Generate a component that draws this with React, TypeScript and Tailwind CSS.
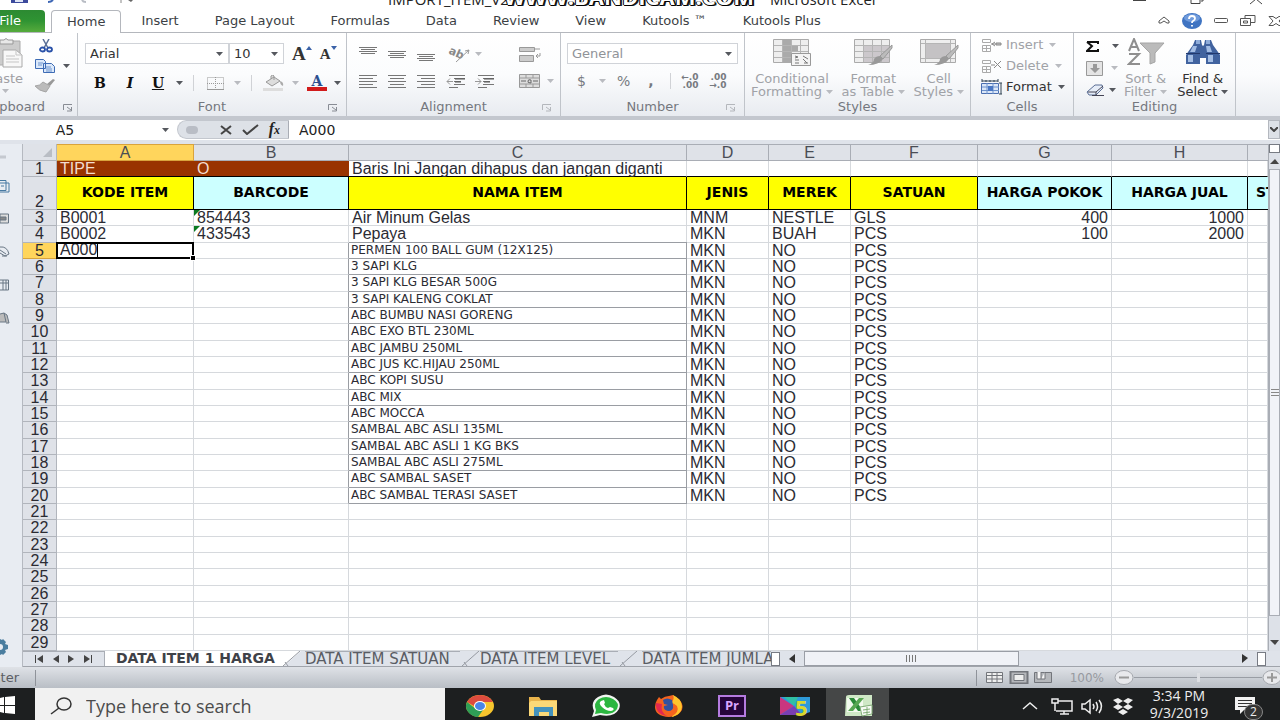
import type { ReactNode } from "react";
import clsx from "clsx";

const MENU = ["Insert", "Page Layout", "Formulas", "Data", "Review", "View", "Kutools ™", "Kutools Plus"];

const COLUMNS = [
    { id: "A", width: 137 },
    { id: "B", width: 155 },
    { id: "C", width: 338 },
    { id: "D", width: 82 },
    { id: "E", width: 82 },
    { id: "F", width: 127 },
    { id: "G", width: 134 },
    { id: "H", width: 136 }
];

const HEADINGS = [
    { text: "KODE ITEM", cyan: false },
    { text: "BARCODE", cyan: true },
    { text: "NAMA ITEM", cyan: false },
    { text: "JENIS", cyan: false },
    { text: "MEREK", cyan: false },
    { text: "SATUAN", cyan: false },
    { text: "HARGA POKOK", cyan: true },
    { text: "HARGA JUAL", cyan: true }
];

const STOCK = [
    ["B0001", "854443", "Air Minum Gelas", "MNM", "NESTLE", "GLS", "400", "1000"],
    ["B0002", "433543", "Pepaya", "MKN", "BUAH", "PCS", "100", "2000"]
];

const ITEMS = [
    "PERMEN 100 BALL GUM (12X125)",
    "3 SAPI KLG",
    "3 SAPI KLG BESAR 500G",
    "3 SAPI KALENG COKLAT",
    "ABC BUMBU NASI GORENG",
    "ABC EXO BTL 230ML",
    "ABC JAMBU 250ML",
    "ABC JUS KC.HIJAU 250ML",
    "ABC KOPI SUSU",
    "ABC MIX",
    "ABC MOCCA",
    "SAMBAL ABC ASLI 135ML",
    "SAMBAL ABC ASLI 1 KG BKS",
    "SAMBAL ABC ASLI 275ML",
    "ABC SAMBAL SASET",
    "ABC SAMBAL TERASI SASET"
];

const EMPTY_ROWS = [21, 22, 23, 24, 25, 26, 27, 28, 29];

export default function App() {
    return (
        <div className="flex h-screen flex-col overflow-hidden bg-white font-['DejaVu_Sans',sans-serif] text-[13px] leading-4 text-[#3c3f45]">
            <TitleBar />
            <MenuTabs />
            <Ribbon />
            <FormulaBar />
            <main className="flex min-h-0 flex-1">
                <SideStrip />
                <div className="flex min-w-0 flex-1 flex-col">
                    <div className="flex min-h-0 flex-1">
                        <Sheet />
                        <VerticalScroll />
                    </div>
                    <SheetTabs />
                </div>
            </main>
            <StatusBar />
            <Taskbar />
        </div>
    );
}

function TitleBar() {
    return (
        <header className="relative flex h-[10px] shrink-0 items-end justify-between overflow-hidden">
            <svg width="136" height="8" className="self-start" aria-hidden="true">
                <path d="M11 0h17v3H11z" fill="#3c4a9c" />
                <path d="M15 0h8v2h-8z" fill="#dfe5f5" />
                <path d="M53 0q-2 2-5 2" stroke="#3d66b5" strokeWidth="2" fill="none" />
                <path d="M82 0q1 2 4 2" stroke="#b8bcc4" strokeWidth="2" fill="none" />
                <path d="M121 0v3" stroke="#888" />
                <path d="M128 0h5l-2 2z" fill="#666" />
            </svg>
            <div className="absolute bottom-px left-[388px] flex items-baseline whitespace-nowrap font-['Open_Sans',sans-serif] text-[15px] leading-5 text-[#222]">
                <span className="w-[116px]">IMPORT_ITEM_V2</span>
                <span className="w-[266px] text-[22px] font-bold text-white [text-shadow:1px_0_#000,-1px_0_#000,0_1px_#000,2px_1px_#222]">
                    WWW.BANDICAM.COM
                </span>
                <span>Microsoft Excel</span>
            </div>
            <svg width="160" height="8" className="self-start" fill="none" stroke="#444" aria-hidden="true">
                <path d="M13 .5h13M71 0v3.500h9V0M81 1h2V0M130 4l6-5 6 5" />
            </svg>
        </header>
    );
}

function MenuTabs() {
    return (
        <nav className="flex h-[23px] shrink-0 items-end border-b border-[#b4b7bd]">
            <button className="flex h-[22px] w-[45px] items-center justify-end self-end rounded-tr-sm bg-linear-to-b from-[#2c8a32] via-[#2f9433] to-[#55ab3c] pr-6 text-white">
                File
            </button>
            <button className="-mb-px ml-[6px] h-[23px] rounded-t-sm border border-b-0 border-[#b4b7bd] bg-white px-[15px]">
                Home
            </button>
            <div className="ml-1 flex gap-1">
                {MENU.map((name) => (
                    <button key={name} className="h-[22px] px-4 whitespace-nowrap">
                        {name}
                    </button>
                ))}
            </div>
            <div className="mr-[-4px] ml-auto flex h-[22px] items-center gap-3">
                <svg width="12" height="10" fill="none" stroke="#555" strokeWidth="1" aria-hidden="true">
                    <path d="M1 5l5-4 5 4v2H9L6 5 3 7H1z" />
                </svg>
                <svg width="20" height="17" viewBox="0 0 20 17" aria-hidden="true">
                    <ellipse cx="10" cy="8" rx="10" ry="8" fill="#3f74c2" />
                    <ellipse cx="10" cy="5" rx="8" ry="4" fill="#6f9bdc" />
                    <path d="M7 6q0-3 3-3t3 2.500q0 1.500-2 2.500-1 .500-1 2M10 12v1.500" fill="none" stroke="#fff" strokeWidth="1.800" />
                </svg>
                <svg width="14" height="6" fill="none" stroke="#555" aria-hidden="true">
                    <rect x=".5" y=".5" width="13" height="4" rx="1" />
                </svg>
                <svg width="16" height="12" fill="none" stroke="#555" aria-hidden="true">
                    <path d="M5 3V.5h10v7h-4M.5 3.500h10v7H.5zM3.500 6h4v2h-4z" />
                </svg>
                <svg width="16" height="10" fill="none" stroke="#555" aria-hidden="true">
                    <path d="M1 .5h4l3 2 3-2h4l-4 4.500 4 4.500h-4l-3-2-3 2H1L5 5z" />
                </svg>
            </div>
        </nav>
    );
}

function Arrow({ dim = false }: { dim?: boolean }) {
    return (
        <svg width="7" height="4" className="shrink-0" aria-hidden="true">
            <path d="M0 0h7L3.500 4z" fill={dim ? "#b9bbc0" : "#55585e"} />
        </svg>
    );
}

function Group({ title, className, launcher = false, dim = false, children }: {
    title: string;
    className: string;
    launcher?: boolean;
    dim?: boolean;
    children: ReactNode;
}) {
    return (
        <section className={clsx("relative flex shrink-0 flex-col border-r border-[#c0c4ca]", className)}>
            <div className="h-[66px]">{children}</div>
            <div className="text-center text-[#74777e]">{title}</div>
            {launcher && (
                <button aria-label={title + " settings"} className="absolute right-2 bottom-1">
                    <svg width="10" height="8" fill="none" stroke={dim ? "#b4b7bc" : "#888c94"} aria-hidden="true">
                        <path d="M.5 6V.5H9M4 3l4 3M8.500 3v4H4" />
                    </svg>
                </button>
            )}
        </section>
    );
}

function Ribbon() {
    return (
        <div className="flex h-[87px] shrink-0 overflow-hidden border-b-4 border-[#c3c7ce] bg-linear-to-b from-white via-[#fbfcfd] to-[#e8ebf0]">
            <section className="relative flex w-[78px] shrink-0 flex-col overflow-hidden border-r border-[#c0c4ca]">
                <div className="flex h-[66px] justify-end gap-3 pr-2">
                    <button className="flex shrink-0 flex-col items-end text-[#a0a0a4]">
                        <svg width="36" height="32" viewBox="0 0 36 32" className="mt-1" aria-hidden="true">
                            <path d="M6 4h27v24H6z" fill="#ccc" stroke="#aaa" />
                            <path d="M13 3h4q2-3 4 0h5v4H13z" fill="#e8e8e8" stroke="#999" />
                            <path d="M16 13h13l6 5v12H16z" fill="#f8f8f8" stroke="#aaa" />
                            <path d="M29 13v5h6M19 19h9M19 22h13M19 25h13" fill="none" stroke="#c5c5c5" />
                        </svg>
                        <span className="mt-[2px]">Paste</span>
                        <span className="mt-[2px] mr-[14px]"><Arrow dim /></span>
                    </button>
                    <div className="flex w-[34px] shrink-0 flex-col gap-[6px] pt-[6px]">
                        <button aria-label="Cut" className="pl-1">
                            <svg width="14" height="14" viewBox="0 0 14 14" fill="none" aria-hidden="true">
                                <path d="M4 0l5 9M10 0L5 9" stroke="#5a6f96" strokeWidth="1.500" />
                                <ellipse cx="3.500" cy="10.500" rx="2.500" ry="2" stroke="#2951a8" strokeWidth="1.800" />
                                <ellipse cx="10.500" cy="10.500" rx="2.500" ry="2" stroke="#2951a8" strokeWidth="1.800" />
                            </svg>
                        </button>
                        <button aria-label="Copy" className="flex items-center gap-2">
                            <svg width="20" height="14" viewBox="0 0 20 14" className="shrink-0" aria-hidden="true">
                                <path d="M.5.5h8l2 2v7H.5zM8.500 4.500h8l3 3v6h-11z" fill="#dce9fa" stroke="#3e6cb5" />
                                <path d="M3 4h5M3 6h4M11 8h5M11 10h6M11 12h6" stroke="#6d94ce" />
                            </svg>
                            <Arrow />
                        </button>
                        <button aria-label="Format Painter">
                            <svg width="20" height="14" viewBox="0 0 20 14" aria-hidden="true">
                                <path d="M18 0l2 1-5 6-3-2z" fill="#999" />
                                <path d="M8 3l7 4-4 6Q4 12 0 7q5 0 8-4z" fill="#bbb" stroke="#a5a5a5" />
                            </svg>
                        </button>
                    </div>
                </div>
                <div className="flex justify-end pr-8 text-[#74777e]">Clipboard</div>
                <button aria-label="Clipboard settings" className="absolute right-1 bottom-1">
                    <svg width="10" height="8" fill="none" stroke="#888c94" aria-hidden="true">
                        <path d="M.5 6V.5H9M4 3l4 3M8.500 3v4H4" />
                    </svg>
                </button>
            </section>

            <Group title="Font" className="w-[269px]" launcher>
                <div className="flex items-center pt-[10px] pl-[7px] text-[#333]">
                    <Dropdown label="Font name" value="Arial" className="w-[144px]" />
                    <Dropdown label="Font size" value="10" className="w-[55px]" />
                    <button className="ml-2 flex items-start font-['Liberation_Serif',serif] text-[19px] font-bold" aria-label="Grow font">
                        A<svg width="6" height="4" aria-hidden="true"><path d="M0 4l3-4 3 4z" fill="#3b62a8" /></svg>
                    </button>
                    <button className="ml-2 flex items-start font-['Liberation_Serif',serif] text-[15px] font-bold" aria-label="Shrink font">
                        A<svg width="6" height="4" aria-hidden="true"><path d="M0 0h6L3 4z" fill="#3b62a8" /></svg>
                    </button>
                </div>
                <div className="flex items-center pt-[9px] pl-[14px] font-['DejaVu_Serif',serif] text-sm font-bold text-[#111]">
                    <button className="w-4">B</button>
                    <button className="ml-[14px] w-4 italic">I</button>
                    <button className="ml-3 w-4 underline">U</button>
                    <span className="ml-[10px]"><Arrow /></span>
                    <i className="ml-[10px] h-4 w-px bg-[#d0d2d6]" />
                    <button aria-label="Borders" className="ml-[13px] flex items-center gap-[10px]">
                        <svg width="17" height="13" fill="none" stroke="#999" strokeDasharray="1 1" aria-hidden="true">
                            <path d="M.5.5h16v12H.5zM8.500 0v13M0 6.500h17" />
                            <path d="M0 12.500h17" strokeDasharray="none" />
                        </svg>
                        <Arrow dim />
                    </button>
                    <i className="ml-[10px] h-4 w-px bg-[#d0d2d6]" />
                    <button aria-label="Fill colour" className="ml-[11px] flex items-center gap-2">
                        <svg width="21" height="16" aria-hidden="true">
                            <path d="M3 7l8-5 6 4-8 5zM8 4V1q2-2 3 0v4" fill="#ddd" stroke="#999" />
                            <path d="M17 6q4 1 3 5-3-1-3-5z" fill="#aaa" />
                            <path d="M0 13h20v3H0z" fill="#ddd" />
                        </svg>
                        <Arrow dim />
                    </button>
                    <button aria-label="Font colour" className="ml-2 flex items-center gap-[7px]">
                        <span className="flex w-5 flex-col items-center border-b-4 border-[#d11b1b] leading-3 text-[#2c4f8f]">A</span>
                        <Arrow />
                    </button>
                </div>
            </Group>

            <Group title="Alignment" className="w-[214px]" launcher dim>
                <div className="grid grid-cols-[22px_22px_22px_22px_29px_17px_28px] items-center justify-items-start gap-x-[7px] gap-y-[10px] pt-3 pl-3">
                    <Lines offset={1} count={4} />
                    <Lines offset={5} count={4} />
                    <Lines offset={8} count={4} />
                    <button aria-label="Orientation" className="col-span-2 flex items-center gap-1">
                        <svg width="25" height="18" aria-hidden="true">
                            <text x="2" y="10" fontSize="11" fontWeight="bold" fill="#888" transform="rotate(24 6 9)">ab</text>
                            <path d="M10 17L23 5m-4 1l4-1-1 4" stroke="#999" fill="none" />
                        </svg>
                        <Arrow dim />
                    </button>
                    <button aria-label="Wrap text" className="col-span-2 pl-2">
                        <svg width="22" height="17" aria-hidden="true">
                            <path d="M.5 1.500h15v4H.5zM.5 9.500h14v6H.5z" fill="#ccc" stroke="#999" />
                            <path d="M16 3h5M21 7v3h-4l2-2M19 12l-2-2" fill="none" stroke="#999" />
                        </svg>
                    </button>
                    <Lines offset={2} count={5} align="left" />
                    <Lines offset={2} count={5} align="center" />
                    <Lines offset={2} count={5} align="right" />
                    <Indent back />
                    <Indent />
                    <button aria-label="Merge cells" className="col-span-2 flex items-center gap-[6px] pl-2">
                        <svg width="22" height="16" aria-hidden="true">
                            <path d="M.5 1.500h20v13H.5zM.5 5h20M.5 11h20M7 1v4M14 1v4M7 11v4M14 11v4" fill="#ddd" stroke="#999" />
                            <path d="M2 8h5M14 8h5M9 8q0-2 3-1v3q-4 0-3-2" stroke="#666" fill="none" />
                        </svg>
                        <Arrow dim />
                    </button>
                </div>
            </Group>

            <Group title="Number" className="w-[184px]" launcher dim>
                <div className="px-[6px] pt-[10px] text-[#909398]">
                    <Dropdown label="Number format" value="General" className="w-full" />
                </div>
                <div className="flex items-center pt-[9px] pl-4 text-sm leading-4 text-[#777a80]">
                    <button>$</button>
                    <span className="ml-[13px]"><Arrow dim /></span>
                    <button className="ml-[11px]">%</button>
                    <button className="ml-[18px] font-bold" aria-label="Comma style">,</button>
                    <i className="ml-4 h-4 w-px bg-[#d0d2d6]" />
                    <Decimals label="Increase decimal" top="←.0" bottom=".00" />
                    <Decimals label="Decrease decimal" top=".00" bottom="→.0" />
                </div>
            </Group>

            <Group title="Styles" className="w-[226px]">
                <div className="flex justify-between px-[6px] pt-[5px] text-[#a0a2a7]">
                    <BigButton top="Conditional" bottom="Formatting" icon={<TableIcon kind="conditional" />} />
                    <BigButton top="Format" bottom="as Table" icon={<TableIcon kind="table" />} />
                    <BigButton top="Cell" bottom="Styles" icon={<TableIcon kind="cell" />} />
                </div>
            </Group>

            <Group title="Cells" className="w-[103px]">
                <div className="flex flex-col gap-[5px] pt-1 pl-[10px] text-[#a0a2a7]">
                    {["Insert", "Delete", "Format"].map((name) => (
                        <button key={name} className={clsx("flex items-center gap-1", name === "Format" && "text-[#333]")}>
                            <CellsIcon name={name} />
                            {name}
                            <span className="ml-[2px]"><Arrow dim={name !== "Format"} /></span>
                        </button>
                    ))}
                </div>
            </Group>

            <Group title="Editing" className="w-[162px]">
                <div className="flex pt-[5px] pl-3">
                    <div className="flex w-[38px] flex-col gap-[6px]">
                        <button aria-label="AutoSum" className="flex h-4 items-center gap-3">
                            <svg width="14" height="11" aria-hidden="true">
                                <path d="M1 1h11v2M1 1l5 4-5 5h11V8" stroke="#111" strokeWidth="2" fill="none" />
                            </svg>
                            <Arrow />
                        </button>
                        <button aria-label="Fill" className="flex h-4 items-center gap-2">
                            <svg width="17" height="15" aria-hidden="true">
                                <path d="M.5.5h16v14H.5z" fill="#e4e4e4" stroke="#999" />
                                <path d="M7 3h4v4h3l-5 5-5-5h3z" fill="#999" />
                            </svg>
                            <Arrow dim />
                        </button>
                        <button aria-label="Clear" className="flex h-4 items-center gap-1">
                            <svg width="19" height="13" aria-hidden="true">
                                <path d="M1 8l8-7h7l1 3-7 7H3z" fill="#e6edf8" stroke="#5a6e95" />
                                <path d="M2 8h8l7-6M10 8v3M6 11.500h12" fill="none" stroke="#445" />
                            </svg>
                            <Arrow />
                        </button>
                    </div>
                    <div className="flex gap-[10px] text-[#a0a2a7]">
                        <BigButton top="Sort &" bottom="Filter" icon={<SortIcon />} />
                        <span className="flex text-[#333]">
                            <BigButton top="Find &" bottom="Select" dark icon={<Binoculars />} />
                        </span>
                    </div>
                </div>
            </Group>
        </div>
    );
}

function Dropdown({ label, value, className }: { label: string; value: string; className: string }) {
    return (
        <div className={clsx("relative flex h-[21px] items-center border border-[#d0d3d8] bg-white", className)}>
            <select aria-label={label} className="w-full appearance-none pl-1 leading-4 outline-none">
                <option>{value}</option>
            </select>
            <span className="pointer-events-none absolute right-[5px]"><Arrow /></span>
        </div>
    );
}

function Lines({ offset, count, align = "top" }: { offset: number; count: number; align?: string }) {
    const rows = Array.from({ length: count }, (_, i) => i);
    const step = count === 5 ? 3 : 2;
    return (
        <button aria-label={"Align " + align}>
            <svg width="19" height="16" aria-hidden="true">
                {rows.map((i) => {
                    const short = i % 2 === 1 ? 4 : 0;
                    const x = align === "left" ? 0 : align === "right" ? short : short / 2;
                    return <rect key={i} x={x} y={offset + i * step} width={18 - short} height="1" fill="#777" />;
                })}
            </svg>
        </button>
    );
}

function Indent({ back = false }: { back?: boolean }) {
    return (
        <button aria-label={back ? "Decrease indent" : "Increase indent"}>
            <svg width="20" height="15" fill="none" stroke="#777" aria-hidden="true">
                <path d="M3 1.500h16M8 4.500h11M8 7.500h7M8 10.500h11M3 13.500h9" />
                <path d={back ? "M7 7.500H1l3-3M1 7.500l3 3" : "M0 7.500h6l-3-3M6 7.500l-3 3"} stroke="#999" />
                <path d="M9 5h10M9 8h6" stroke="#555" />
            </svg>
        </button>
    );
}

function Decimals({ label, top, bottom }: { label: string; top: string; bottom: string }) {
    return (
        <button aria-label={label} className="ml-2 flex w-5 flex-col items-end text-[9px] leading-[8px] font-bold">
            <span>{top}</span>
            <span>{bottom}</span>
        </button>
    );
}

function BigButton({ top, bottom, icon, dark = false }: { top: string; bottom: string; icon: ReactNode; dark?: boolean }) {
    return (
        <button className="flex flex-col items-center leading-[13px]">
            {icon}
            <span className="mt-[6px]">{top}</span>
            <span className="flex items-center gap-1 whitespace-nowrap">
                {bottom} <Arrow dim={!dark} />
            </span>
        </button>
    );
}

function TableIcon({ kind }: { kind: string }) {
    return (
        <svg width="40" height="28" viewBox="0 0 40 28" aria-hidden="true">
            <path d="M1.500 1.500h35v23h-35z" fill="#eee" stroke="#aaa" />
            {kind === "cell" ? (
                <path d="M7 6h24v14H7z" fill="#c4c2c4" />
            ) : (
                <path d={kind === "table" ? "M10 7h26v17H10z" : "M10 2h9v5h7v6h-7v11h-9z"} fill={kind === "table" ? "#ccc8cc" : "#aaa"} />
            )}
            {kind === "cell" ? (
                <path d="M2 5.500h34M2 20.500h34M6.500 2v22M31.500 2v22" stroke="#b5b5b5" />
            ) : (
                <path d="M2 7.500h34M2 13.500h34M2 19.500h34M10.500 2v22M19.500 2v22M28.500 2v22" stroke="#b5b5b5" />
            )}
            {kind === "conditional" ? (
                <>
                    <path d="M19.500 15.500h19v12h-19z" fill="#f4f4f4" stroke="#999" />
                    <path d="M23 18l3 1-3 1M23 22h4M23 25h4M31 18l5 3M31 21l4 4M32 25h4" fill="none" stroke="#777" />
                </>
            ) : (
                <>
                    <path d="M39 7L27 18l3 3 9-11z" fill="#bbb" stroke="#999" />
                    <path d="M27 18l3 3q-4 6-15 6 6-2 6-6 2-3 6-3z" fill="#999" />
                </>
            )}
        </svg>
    );
}

function CellsIcon({ name }: { name: string }) {
    if (name === "Format") {
        return (
            <svg width="21" height="16" aria-hidden="true">
                <path d="M.5 4.500h17v10H.5z" fill="#dbe7f8" stroke="#4b6fb0" />
                <path d="M1 8h17M1 11.500h17M6 4v11M12 4v11" stroke="#6d92cc" />
                <path d="M7 7h5v5H7z" fill="#4977c4" />
                <path d="M1 0v3M5 1v2M9 1v2M13 1v2M17 0v3M1 2h16M20 4v11M18 4h3M18 15h3" stroke="#345" />
            </svg>
        );
    }
    return (
        <svg width="21" height="15" fill="none" stroke="#aaa" aria-hidden="true">
            <path d="M1.500 1.500h8v3h-8zM1.500 7.500h8v6h-8zM1.500 10.500h8M5.500 8v5" />
            <path d={name === "Insert" ? "M10 6h10M14 4l-3 2 3 2M15 5h5v2h-5z" : "M10 6h4M13 2l7 7M20 2l-7 7"} stroke="#888" />
        </svg>
    );
}

function SortIcon() {
    return (
        <svg width="38" height="28" viewBox="0 0 38 28" aria-hidden="true">
            <path d="M13 5h24l-9 10v9l-5 2V15z" fill="#bbb" stroke="#a5a5a5" />
            <path d="M2 13L7 1l5 12M4 9h6M2 16h10L2 26h11" fill="none" stroke="#8f8f8f" strokeWidth="2" />
        </svg>
    );
}

function Binoculars() {
    return (
        <svg width="38" height="28" viewBox="0 0 38 28" aria-hidden="true">
            <path d="M11 2h6l1 5 1 1 1-1 1-5h6l2 5 5 7 2 3v9H22v-6h-6v6H2v-9l2-3 5-7z" fill="#41639f" />
            <path d="M12 2h4v4h-4zM22 2h4v4h-4z" fill="#8eabd8" />
            <path d="M9 8h4l-2 6H6zM22 8h4l2 6h-5zM4 17h5v7H4zM24 17h5v7h-5z" fill="#a3bde4" />
            <path d="M2 15.500h14M22 15.500h14" stroke="#22396d" />
        </svg>
    );
}

function FormulaBar() {
    return (
        <div className="flex h-6 shrink-0 items-start border-b-[4px] border-[#dfe3ea] bg-white text-sm text-[#222]">
            <input aria-label="Name box" defaultValue="A5" className="h-[19px] w-[130px] text-center outline-none" />
            <span className="ml-8 self-center"><Arrow /></span>
            <div className="ml-2 flex h-[19px] w-[112px] items-center justify-between rounded-l-full border border-r-[#a9adb5] border-[#c3c7ce] bg-[#dde1e7] pr-2 pl-2">
                <i className="h-2 w-3 rounded-full bg-[#b9bdc5]" />
                <button aria-label="Cancel" className="ml-3">
                    <svg width="12" height="10"><path d="M1 1l10 8M11 1L1 9" stroke="#444" strokeWidth="2" /></svg>
                </button>
                <button aria-label="Enter">
                    <svg width="17" height="11" fill="none"><path d="M1 6l4 4L16 1" stroke="#444" strokeWidth="2" /></svg>
                </button>
                <button aria-label="Insert function" className="font-['Liberation_Serif',serif] text-base leading-4 font-bold italic">
                    f<span className="text-xs">x</span>
                </button>
            </div>
            <input aria-label="Formula bar" defaultValue="A000" className="h-[19px] min-w-0 flex-1 pl-[10px] outline-none" />
            <button aria-label="Expand formula bar" className="flex h-[19px] w-3 items-center justify-center border border-[#b4b8bf] bg-[#dde1e7]">
                <svg width="8" height="5" fill="none"><path d="M0 0l4 4 4-4" stroke="#444" strokeWidth="2" /></svg>
            </button>
        </div>
    );
}

function SideStrip() {
    return (
        <aside className="flex w-[23px] shrink-0 flex-col items-start border-r border-[#b5b9c0] bg-[#e8ecf2]">
            <svg width="11" height="190" fill="none" stroke="#687684" aria-hidden="true">
                <path d="M0 13h6" stroke="#c5c9d0" strokeWidth="3" />
                <path d="M0 36.500h6v10H0M6 39h3v9H0M0 39h6M1 42h3" stroke="#4679a2" />
                <path d="M0 70h8.500v9H0z" fill="#ddd" />
                <path d="M0 73h6v3H0z" fill="#888" />
                <path d="M0 103q7-1 9 7l-4 2-5-3M0 106l6 4M2 112h5" />
                <path d="M0 136h8.500v10H0M3 136v10M6 136v10M0 139h8" />
                <path d="M0 170l4-1 2 9H0M4 169l3 2 2 8H6" fill="#bbb" />
            </svg>
            <svg width="11" height="20" viewBox="0 0 11 20" className="mt-auto mb-[10px]" aria-hidden="true">
                <path d="M0 2l2 1 1-1 3 3-1 2 3 1v4l-3 1 1 2-3 3-1-1-2 1z" fill="#4a7d9f" />
                <path d="M0 7q3 0 3 3t-3 3z" fill="#e8ecf2" />
            </svg>
        </aside>
    );
}

function RowHead({ n, active = false }: { n: number; active?: boolean }) {
    return (
        <th
            scope="row"
            className={clsx(
                "border-r border-b p-0 text-center align-top font-normal",
                active ? "border-[#d9a33c] bg-[#ffd55c]" : "border-[#b1b5bc] bg-[#dfe2e8]"
            )}
        >
            {n}
        </th>
    );
}

const CELL = "whitespace-nowrap border-r border-b border-[#d6d9dd] px-[3px] py-0 align-top";

function Sheet() {
    return (
        <div className="min-w-0 flex-1 overflow-hidden">
            <table className="h-full w-full table-fixed border-separate border-spacing-0 font-['Liberation_Sans',Arial,sans-serif] text-base leading-[15px] text-[#2b2b33]">
                <colgroup>
                    <col className="w-[34px]" />
                    {COLUMNS.map((c) => (
                        <col key={c.id} style={{ width: c.width }} />
                    ))}
                    <col />
                </colgroup>
                <thead>
                    <tr className="h-[17px] text-[#4a4d55]">
                        <th className="border-r border-b border-[#b1b5bc] bg-[#dfe2e8] p-0" aria-label="Select all">
                            <svg width="9" height="9" className="ml-auto mr-1"><path d="M9 0v9H0z" fill="#b9bdc4" /></svg>
                        </th>
                        {COLUMNS.map((c) => (
                            <th
                                key={c.id}
                                scope="col"
                                className={clsx(
                                    "border-t border-r border-b p-0 font-normal",
                                    c.id === "A" ? "border-[#d9a33c] bg-[#ffd55c]" : "border-[#a9adb5] bg-[#dfe2e8]"
                                )}
                            >
                                {c.id}
                            </th>
                        ))}
                        <th className="border-t border-b border-[#a9adb5] bg-[#dfe2e8]" />
                    </tr>
                </thead>
                <tbody>
                    <tr className="h-4">
                        <RowHead n={1} />
                        <td className="border-b border-black bg-[#993300] px-[3px] py-0 align-top text-[#f3dcd0]">TIPE</td>
                        <td className="border-b border-black bg-[#993300] px-[3px] py-0 align-top text-[#f3dcd0]">O</td>
                        <td className="border-r border-b border-r-[#d6d9dd] border-b-black px-[3px] py-0 align-top whitespace-nowrap">
                            Baris Ini Jangan dihapus dan jangan diganti
                        </td>
                        {["D", "E", "F", "G", "H", "I"].map((id) => (
                            <td key={id} className="border-r border-b border-r-[#d6d9dd] border-b-black p-0" />
                        ))}
                    </tr>
                    <tr className="h-[33px] font-['DejaVu_Sans',sans-serif] text-sm leading-[15px] font-bold text-black">
                        <th scope="row" className="border-r border-b border-[#b1b5bc] bg-[#dfe2e8] p-0 align-bottom font-['Liberation_Sans',Arial,sans-serif] text-base leading-[15px] font-normal text-[#2b2b33]">
                            2
                        </th>
                        {HEADINGS.map((h) => (
                            <td
                                key={h.text}
                                className={clsx(
                                    "border-r border-b border-black px-0 pt-0 pb-[2px] text-center whitespace-nowrap",
                                    h.cyan ? "bg-[#ccffff]" : "bg-[#ffff00]"
                                )}
                            >
                                {h.text}
                            </td>
                        ))}
                        <td className="overflow-hidden border-b border-black bg-[#ccffff] pt-0 pr-0 pb-[2px] pl-2">STOK</td>
                    </tr>
                    {STOCK.map((row, r) => (
                        <tr key={row[0]}>
                            <RowHead n={r + 3} />
                            {row.map((value, c) => (
                                <td key={c} className={clsx(CELL, c > 5 && "text-right", c === 1 && "relative")}>
                                    {c === 1 && (
                                        <svg width="6" height="6" className="absolute top-0 left-0" aria-hidden="true">
                                            <path d="M0 0h6L0 6z" fill="#0a7a20" />
                                        </svg>
                                    )}
                                    {value}
                                </td>
                            ))}
                            <td className={CELL} />
                        </tr>
                    ))}
                    {ITEMS.map((item, r) => (
                        <tr key={item}>
                            <RowHead n={r + 5} active={r === 0} />
                            {r === 0 ? <EditingCell /> : <td className={CELL} />}
                            <td className="border-r border-b border-r-[#9a9da3] border-b-[#d6d9dd] p-0" />
                            <td
                                className={clsx(
                                    "border-r border-b border-[#9a9da3] px-[2px] py-0 align-top font-['DejaVu_Sans',sans-serif] text-xs leading-[14px] whitespace-nowrap",
                                    r === 0 && "shadow-[0_-1px_#9a9da3]"
                                )}
                            >
                                {item}
                            </td>
                            <td className={CELL}>MKN</td>
                            <td className={CELL}>NO</td>
                            <td className={CELL}>PCS</td>
                            <td className={CELL} />
                            <td className={CELL} />
                            <td className={CELL} />
                        </tr>
                    ))}
                    {EMPTY_ROWS.map((n) => (
                        <tr key={n}>
                            <RowHead n={n} />
                            {COLUMNS.map((c) => (
                                <td key={c.id} className={CELL} />
                            ))}
                            <td className={CELL} />
                        </tr>
                    ))}
                </tbody>
            </table>
        </div>
    );
}

function EditingCell() {
    return (
        <td className="relative border-r border-b border-[#d6d9dd] px-[3px] py-0 align-top">
            <div className="flex h-[15px] items-center">
                <input aria-label="A5" defaultValue="A000" className="h-[15px] p-0 leading-[15px] outline-none [field-sizing:content]" />
                <i className="h-[14px] w-px bg-black" />
            </div>
            <i className="pointer-events-none absolute -inset-px border-2 border-black" />
            <i className="absolute -right-[3px] -bottom-[3px] size-[6px] border border-white bg-black" />
        </td>
    );
}

function VerticalScroll() {
    return (
        <div className="flex w-3 shrink-0 flex-col items-end border-l border-[#a9adb5] bg-[#dde1e8]">
            <i className="h-[9px] w-full border border-[#777b83] bg-white" />
            <button aria-label="Scroll up" className="flex h-4 w-full items-center justify-center">
                <svg width="9" height="5"><path d="M0 5l5-5 4 5z" fill="#444" /></svg>
            </button>
            <div className="flex w-full flex-1 items-center justify-center border border-[#a9adb5] bg-[#f1f3f8]">
                <svg width="8" height="8" stroke="#888"><path d="M0 .5h8M0 3.500h8M0 6.500h8" /></svg>
            </div>
            <button aria-label="Scroll down" className="flex h-[35px] w-full items-end justify-center pb-[6px]">
                <svg width="9" height="5"><path d="M0 0h9L5 5z" fill="#444" /></svg>
            </button>
        </div>
    );
}

function Slant({ first = false }: { first?: boolean }) {
    return (
        <svg width="20" height="15" className="shrink-0" aria-hidden="true">
            {first && <path d="M0 0h20L3 15H0z" fill="#fff" />}
            <path d="M19 0L2 15M4 11l3 4" fill="none" stroke="#9599a1" />
        </svg>
    );
}

function SheetTabs() {
    return (
        <div className="flex h-4 shrink-0 items-center border-b border-[#a0a4ab] bg-[#dfe3ea] text-sm leading-[15px] text-[#5a5d64]">
            <div className="flex h-full w-[82px] shrink-0 items-center justify-between border-t border-r border-[#a9adb5] px-3">
                <button aria-label="First sheet"><svg width="8" height="8"><path d="M0 0h1v8H0zM8 0v8L2 4z" fill="#444" /></svg></button>
                <button aria-label="Previous sheet"><svg width="6" height="8"><path d="M6 0v8L0 4z" fill="#444" /></svg></button>
                <button aria-label="Next sheet"><svg width="6" height="8"><path d="M0 0v8l6-4z" fill="#444" /></svg></button>
                <button aria-label="Last sheet"><svg width="8" height="8"><path d="M7 0h1v8H7zM0 0v8l6-4z" fill="#444" /></svg></button>
            </div>
            <div className="flex h-full w-[666px] min-w-0 items-center overflow-hidden whitespace-nowrap">
                <button className="h-full shrink-0 bg-white pr-[6px] pl-[11px] font-bold text-[#3f4248]">DATA ITEM 1 HARGA</button>
                <Slant first />
                <button className="ml-1 h-full w-[155px] shrink-0 border-t border-[#a9adb5] text-left text-[15px] leading-[13px]">DATA ITEM SATUAN</button>
                <Slant />
                <button className="h-full w-[138px] shrink-0 border-t border-[#a9adb5] text-left text-[15px] leading-[13px]">DATA ITEM LEVEL</button>
                <Slant />
                <button className="ml-1 h-full border-t border-[#a9adb5] text-left text-[15px] leading-[13px]">DATA ITEM JUMLAH</button>
            </div>
            <i className="h-[14px] w-[9px] shrink-0 border border-[#777b83] bg-white" />
            <button aria-label="Scroll left" className="flex w-6 shrink-0 justify-center">
                <svg width="6" height="9"><path d="M6 0v9L0 5z" fill="#333" /></svg>
            </button>
            <div className="flex h-full min-w-0 flex-1">
                <div className="flex h-full w-1/2 items-center justify-center border border-[#9a9ea6] bg-[#f0f2f7]">
                    <svg width="10" height="7" stroke="#777"><path d="M.5 0v7M3.500 0v7M6.500 0v7M9.500 0v7" /></svg>
                </div>
            </div>
            <button aria-label="Scroll right" className="flex w-6 shrink-0 justify-center">
                <svg width="6" height="9"><path d="M0 0v9l6-5z" fill="#333" /></svg>
            </button>
            <i className="mr-[14px] h-[14px] w-[9px] shrink-0 border border-[#777b83] bg-white" />
        </div>
    );
}

function StatusBar() {
    return (
        <footer className="flex h-[21px] shrink-0 items-center overflow-hidden bg-linear-to-b from-[#dfe2e7] to-[#b9bec5] text-[#5b5e64]">
            <div className="flex h-4 w-9 shrink-0 justify-end border-r border-[#8f939a] pr-4">Enter</div>
            <div className="ml-auto flex h-4 items-center border-l border-[#8f939a] pl-[9px] text-[#96999f]">
                <svg width="66" height="13" fill="none" stroke="#72757b" aria-hidden="true">
                    <path d="M.5 1.500h16v10H.5zM1 4.500h16M1 8h16M6 2v9M11 2v9" fill="#eee" />
                    <path d="M24.500.5h17v12h-17z" fill="#b5b7bb" strokeWidth="2" />
                    <path d="M28 3.500h10v6H28z" fill="#eee" />
                    <path d="M48.500 1.500h17v10h-17z" fill="#b5b7bb" />
                    <path d="M51 1v7h4V1M55 8h4V1" fill="#f4f4f4" />
                </svg>
                <span className="ml-[18px] text-xs">100%</span>
                <button aria-label="Zoom out" className="ml-[10px]">
                    <svg width="20" height="15"><ellipse cx="10" cy="7.500" rx="9" ry="7" fill="#e8e9ec" stroke="#a5a8ae" /><path d="M5 7.500h10" stroke="#999" strokeWidth="2" /></svg>
                </button>
                <input
                    type="range"
                    aria-label="Zoom"
                    defaultValue={50}
                    className="h-[9px] w-[128px] appearance-none bg-[linear-gradient(#999da4,#999da4)] bg-[length:100%_1px] bg-center bg-no-repeat [&::-webkit-slider-thumb]:h-[9px] [&::-webkit-slider-thumb]:w-[3px] [&::-webkit-slider-thumb]:appearance-none [&::-webkit-slider-thumb]:bg-[#dddfe3]"
                />
                <button aria-label="Zoom in" className="-mr-[2px]">
                    <svg width="20" height="15"><ellipse cx="10" cy="7.500" rx="9" ry="7" fill="#e8e9ec" stroke="#a5a8ae" /><path d="M5 7.500h10M10 3v9" stroke="#999" strokeWidth="2" /></svg>
                </button>
            </div>
        </footer>
    );
}

const APPS: { name: string; icon: ReactNode }[] = [
    {
        name: "Chrome",
        icon: (
            <>
                <ellipse cx="15" cy="12" rx="14" ry="11" fill="#f7c52d" />
                <path d="M2 8Q6 1 15 1t13 7H15q-5 0-6 4z" fill="#dd4b3e" />
                <path d="M2 8q-3 6 2 11 4 4 9 4l5-7-7-1z" fill="#2f9e56" />
                <ellipse cx="15" cy="12" rx="6" ry="5" fill="#fff" />
                <ellipse cx="15" cy="12" rx="5" ry="4" fill="#4a85e8" />
            </>
        )
    },
    {
        name: "Explorer",
        icon: (
            <>
                <path d="M1 3h10l2 3h16v16H1z" fill="#e9b44c" />
                <path d="M3 7h26v15H1V9z" fill="#fbd877" />
                <path d="M6 13h19v9h-4v-4H11v4H6z" fill="#4593bd" />
            </>
        )
    },
    {
        name: "WhatsApp",
        icon: (
            <>
                <path d="M1 23l2-6Q-1 8 7 3q8-5 16 0t5 12q-5 9-19 6z" fill="#f1f5f1" />
                <path d="M4 20l1-4Q2 9 8 5q7-4 14 0t4 10q-5 7-16 4z" fill="#2bb640" />
                <path d="M10 7q-3 2 1 6t9 4q4-1 2-3l-3-1-2 1q-3-1-4-4l1-1-1-3z" fill="#fff" />
            </>
        )
    },
    {
        name: "Firefox",
        icon: (
            <>
                <path d="M3 6l2-3 2 2q4-3 8-3l4-1q3 3 6 4 5 6 3 11-4 7-13 7Q1 22 1 13q0-4 2-7z" fill="#f4631e" />
                <path d="M19 1q9 4 9 12-1 8-11 10 9-5 6-11-3-3-6-3 4-4 2-8z" fill="#ffc52c" />
                <path d="M9 6q4-3 9 0l1 5q1 6-5 6-5-1-4-5l4-1-4-1z" fill="#3152a0" />
                <path d="M2 9q-1 11 11 13-7-4-5-12z" fill="#e22850" />
            </>
        )
    },
    {
        name: "Premiere",
        icon: (
            <>
                <path d="M2 2h26v20H2z" fill="#26043a" stroke="#b57be0" strokeWidth="2" />
                <text x="15" y="16" textAnchor="middle" fontSize="13" fontWeight="bold" fill="#d9a6ff">Pr</text>
            </>
        )
    },
    {
        name: "Video editor",
        icon: (
            <>
                <path d="M0 3h30v15l-8 3H0z" fill="#2e9ad8" />
                <path d="M0 3l14 9L0 21z" fill="#c9367f" />
                <path d="M0 21l14-9 8 9z" fill="#7a3fb4" />
                <path d="M4 3h14l-4 9z" fill="#30bfa5" />
                <text x="15" y="22" fontSize="22" fontWeight="bold" fill="#d9d82f">5</text>
            </>
        )
    },
    {
        name: "Excel",
        icon: (
            <>
                <path d="M3 3q0-2 3-2h23v21H2z" fill="#cfe8c6" />
                <path d="M4 4h16v14H4z" fill="#f2faee" />
                <path d="M6 4h5l9 13h-5z" fill="#2a8a38" />
                <path d="M16 4h5L10 17H5z" fill="#57a752" />
                <path d="M17 13l12-2v9l-10 2z" fill="#f7fbf5" stroke="#80ad77" />
                <path d="M20 16l7-1M20 19l7-1M24 13v8" stroke="#80ad77" />
            </>
        )
    }
];

function Taskbar() {
    return (
        <div className="flex h-8 shrink-0 overflow-hidden bg-[#1d1f20] font-['Open_Sans',sans-serif] text-[#eee]">
            <button aria-label="Start" className="w-[35px] shrink-0">
                <svg width="16" height="18" className="mt-[2px]" fill="#fff" aria-hidden="true">
                    <path d="M0 2l4-1v8H0zM5 1l10-1v9H5zM0 10h4v7l-4-1zM5 10h10v8L5 17z" />
                </svg>
            </button>
            <label className="flex w-[410px] shrink-0 items-center gap-[14px] bg-[#f1f1f1] pt-1 pl-[15px]">
                <svg width="22" height="18" fill="none" stroke="#333" strokeWidth="1.500" aria-hidden="true">
                    <ellipse cx="14" cy="7" rx="7" ry="6" />
                    <path d="M9 11l-8 6" />
                </svg>
                <input
                    aria-label="Search"
                    placeholder="Type here to search"
                    className="min-w-0 flex-1 text-lg leading-6 outline-none placeholder:text-[#4c4c4c]"
                />
            </label>
            <div className="ml-[3px] flex">
                {APPS.map(({ name, icon }) => (
                    <button
                        key={name}
                        aria-label={name}
                        className={clsx("flex w-[63px] shrink-0 items-center justify-center pt-1", name === "Excel" && "bg-[#454747]")}
                    >
                        <svg width="30" height="24" viewBox="0 0 30 24" aria-hidden="true">{icon}</svg>
                    </button>
                ))}
            </div>
            <div className="ml-auto flex items-center pr-[10px]">
                <svg width="118" height="22" className="mt-1" fill="none" stroke="#eee" strokeWidth="1.500" aria-hidden="true">
                    <path d="M1 14l7-6 7 6" />
                    <path d="M36 6h14v10H34M34 4h-4v4h6V4zM33 8v8M38 19h9M42 16v3" />
                    <path d="M60 9h3l5-4v13l-5-4h-3zM71 9q2 3 0 5M74 7q3 5 0 9M77 5q5 6 0 13" />
                    <path d="M91 5l5-2 5 3-5 3zM111 5l-5-2-5 3 5 3zM91 12l5-3 5 3-5 3zM111 12l-5-3-5 3 5 3zM96 17l5-3 5 3-5 3z" fill="#eee" stroke="none" />
                </svg>
                <div className="ml-1 flex w-[70px] flex-col items-center text-sm leading-[17px]">
                    <span>3:34 PM</span>
                    <span>9/3/2019</span>
                </div>
                <button aria-label="Notifications" className="relative ml-5 h-full w-9">
                    <svg width="22" height="18" className="absolute top-2 left-0" aria-hidden="true">
                        <path d="M1 1h20v13H10l-4 4v-4H1z" fill="#f2f2f2" />
                        <path d="M4 4.500h14M4 7.500h14M4 10.500h10" stroke="#333" />
                    </svg>
                    <span className="absolute top-4 left-[10px] flex h-4 w-[19px] items-center justify-center rounded-full border border-[#888] bg-[#333] text-xs">2</span>
                </button>
            </div>
        </div>
    );
}
